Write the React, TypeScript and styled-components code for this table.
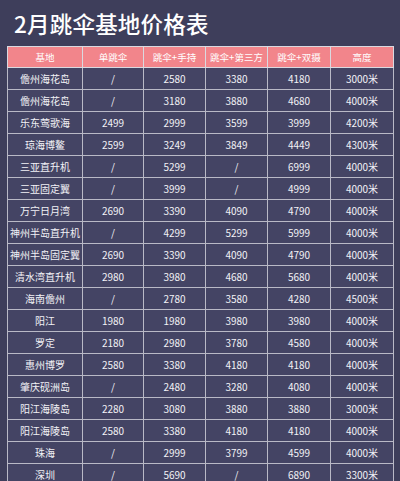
import styled, { createGlobalStyle } from "styled-components";

const GlobalStyle = createGlobalStyle`
  body {
    margin: 0;
    background: #3e3e5b;
    font-family: "Noto Sans CJK SC", "Noto Sans", sans-serif;
  }
`;

const columns = [
  { title: "基地", width: 75 },
  { title: "单跳伞", width: 61 },
  { title: "跳伞+手持", width: 62 },
  { title: "跳伞+第三方", width: 62 },
  { title: "跳伞+双摄", width: 63 },
  { title: "高度", width: 63 },
];

const rows: string[][] = [
  ["儋州海花岛", "/", "2580", "3380", "4180", "3000米"],
  ["儋州海花岛", "/", "3180", "3880", "4680", "4000米"],
  ["乐东莺歌海", "2499", "2999", "3599", "3999", "4200米"],
  ["琼海博鳌", "2599", "3249", "3849", "4449", "4300米"],
  ["三亚直升机", "/", "5299", "/", "6999", "4000米"],
  ["三亚固定翼", "/", "3999", "/", "4999", "4000米"],
  ["万宁日月湾", "2690", "3390", "4090", "4790", "4000米"],
  ["神州半岛直升机", "/", "4299", "5299", "5999", "4000米"],
  ["神州半岛固定翼", "2690", "3390", "4090", "4790", "4000米"],
  ["清水湾直升机", "2980", "3980", "4680", "5680", "4000米"],
  ["海南儋州", "/", "2780", "3580", "4280", "4500米"],
  ["阳江", "1980", "1980", "3980", "3980", "4000米"],
  ["罗定", "2180", "2980", "3780", "4580", "4000米"],
  ["惠州博罗", "2580", "3380", "4180", "4180", "4000米"],
  ["肇庆砚洲岛", "/", "2480", "3280", "4080", "4000米"],
  ["阳江海陵岛", "2280", "3080", "3880", "3880", "3000米"],
  ["阳江海陵岛", "2580", "3380", "4180", "4180", "4000米"],
  ["珠海", "/", "2999", "3799", "4599", "4000米"],
  ["深圳", "/", "5690", "/", "6890", "3300米"],
];

const App = () => {
  return (
    <Page>
      <GlobalStyle />
      <Title>2月跳伞基地价格表</Title>
      <PriceTable>
        <colgroup>
          {columns.map((c) => (
            <col key={c.title} style={{ width: c.width }} />
          ))}
        </colgroup>
        <thead>
          <tr>
            {columns.map((c) => (
              <HeadCell key={c.title}>{c.title}</HeadCell>
            ))}
          </tr>
        </thead>
        <tbody>
          {rows.map((row, i) => (
            <tr key={i}>
              {row.map((cell, j) => (
                <Cell key={j}>{cell}</Cell>
              ))}
            </tr>
          ))}
        </tbody>
      </PriceTable>
    </Page>
  );
};

export default App;

const Page = styled.div`
  width: 400px;
  padding: 8px 0 0 7px;
  box-sizing: border-box;
`;

const Title = styled.h1`
  margin: 0 0 7px 7px;
  height: 31px;
  line-height: 31px;
  font-size: 22.5px;
  font-weight: 500;
  color: #ffffff;
  letter-spacing: 0.2px;
`;

const PriceTable = styled.table`
  width: 386px;
  table-layout: fixed;
  border-collapse: collapse;
  border: 1px solid #c4c4cf;
`;

const HeadCell = styled.th`
  height: 20px;
  padding: 0;
  background: #f2858b;
  color: #ffffff;
  font-size: 9.5px;
  font-weight: 400;
  text-align: center;
  border: 1px solid #d9d9e0;
`;

const Cell = styled.td`
  height: 21px;
  padding: 0;
  background: #444464;
  color: #f2f2f6;
  font-size: 10px;
  text-align: center;
  white-space: nowrap;
  border: 1px solid #b9b9c6;
`;
